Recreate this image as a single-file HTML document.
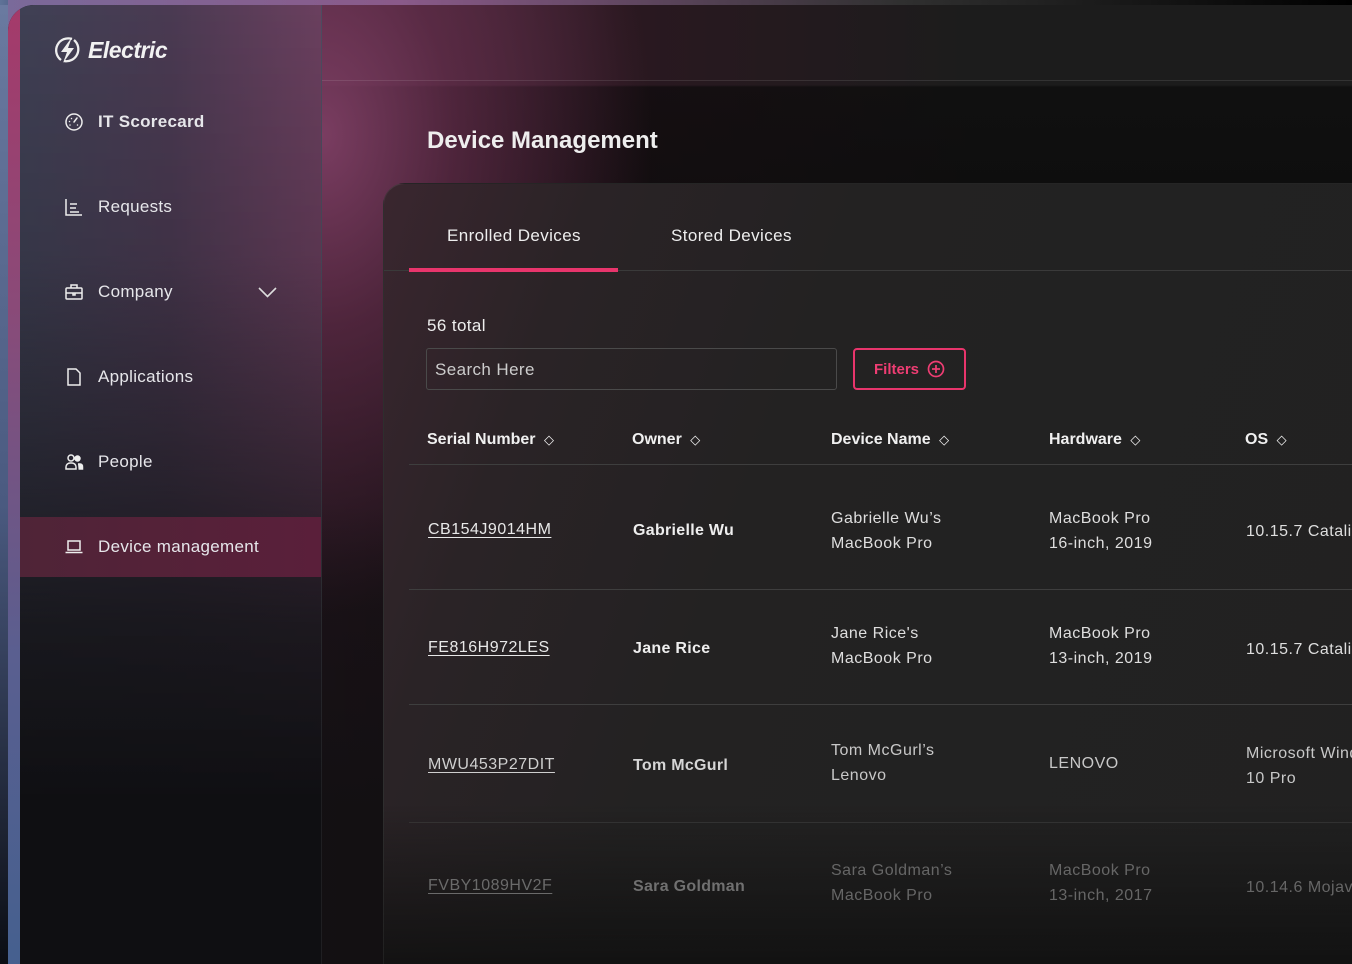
<!DOCTYPE html>
<html><head><meta charset="utf-8"><style>
*{margin:0;padding:0;box-sizing:border-box}
html,body{width:1352px;height:964px;overflow:hidden}
body{background:#000;font-family:"Liberation Sans",Arial,sans-serif;position:relative;color:#e8e8e8}
.abs{position:absolute}
#edge{left:0;top:0;width:1352px;height:964px;background:linear-gradient(90deg,#5f7398 0,#58698f 8px,transparent 8px),linear-gradient(90deg,#7a6a9a 0,#8a5a8a 400px,#303030 900px,#000 1352px);}
#edge2{left:0;top:5px;width:8px;height:959px;background:linear-gradient(180deg,#6a7aa0 0,#4a5a80 500px,#0a0c12 964px)}
#win{left:8px;top:5px;width:1344px;height:959px;border-radius:26px 0 0 0;overflow:hidden;background:#0c0c0c}
#lstrip{left:0;top:0;width:12px;height:100%;background:linear-gradient(180deg,#a53a6a 0,#8a4a78 300px,#5a5f90 650px,#45608f 964px)}
#side{left:12px;top:0;width:302px;height:100%;background:linear-gradient(180deg,rgba(0,0,0,0) 0,rgba(0,0,0,.15) 250px,rgba(20,20,24,.9) 620px,rgba(15,15,18,1) 800px),linear-gradient(90deg,#3f4054 0,#4a3a52 150px,#6a3f5e 302px);border-right:1px solid rgba(255,255,255,0.07)}
#main{left:314px;top:0;width:1100px;height:100%;background:linear-gradient(180deg,rgba(0,0,0,0) 0,rgba(0,0,0,0) 500px,rgba(18,16,18,.9) 800px),radial-gradient(ellipse 330px 480px at 0 130px,#7a3d61 0,rgba(100,45,75,.7) 40%,rgba(0,0,0,0) 100%),linear-gradient(180deg,rgba(0,0,0,0) 0,rgba(0,0,0,0) 80px,rgba(8,8,8,.6) 82px,rgba(8,8,8,.7) 200px),linear-gradient(90deg,#4a2a3e 0,#2a1820 300px,#1c1c1c 650px,#1c1c1c 100%)}
#hline{left:322px;top:80px;width:1030px;height:1px;background:rgba(255,255,255,.1)}
#card{left:383px;top:183px;width:1000px;height:781px;border-radius:22px 0 0 0;background:linear-gradient(180deg,rgba(0,0,0,0) 0,rgba(0,0,0,0) 620px,rgba(15,15,15,.85) 781px),linear-gradient(110deg,#3a262f 0,#2a2326 200px,#232222 450px,#212121 100%);border-top:1px solid rgba(255,255,255,.08);border-left:1px solid rgba(255,255,255,.06)}
.nav{left:64px;font-size:17px;color:#e6e6ea;display:flex;align-items:center;gap:14px;letter-spacing:.3px}
.nav svg{width:20px;height:20px}
.th{top:431px;font-size:16px;font-weight:bold;color:#f0f0f0}
.th span{font-weight:normal;font-size:13px;margin-left:4px}
.line{left:409px;width:1000px;height:1px;background:#3e3e3e}
.sn{left:428px;font-size:16px;text-decoration:underline;text-underline-offset:3px;color:#e8e8e8;letter-spacing:.5px}
.ow{left:633px;font-size:16px;font-weight:bold;color:#eee;letter-spacing:.3px}
.c{font-size:16px;line-height:25px;color:#dedede;letter-spacing:.5px}
.t{letter-spacing:.4px}
</style></head><body>
<div class="abs" id="edge"></div>
<div class="abs" id="edge2"></div>
<div class="abs" id="win">
<div class="abs" id="lstrip"></div>
<div class="abs" id="side"></div>
<div class="abs" id="main"></div>
</div>
<div class="abs" id="hline"></div>
<div class="abs" style="left:20px;top:517px;width:301px;height:60px;background:linear-gradient(90deg,#4f2437,#5a1f3a)"></div>

<div class="abs" style="left:52px;top:34px;display:flex;align-items:center;gap:5px">
<svg width="31" height="32" viewBox="0 0 31 32"><path d="M9 26A12 12 0 0 1 20 5M22 6A12 12 0 0 1 12 27" fill="none" stroke="#eee" stroke-width="2.3"/><path d="M20 3L9 18h6l-4 11 11-15h-6z" fill="#eee"/></svg>
<span style="font-size:23px;font-weight:bold;font-style:italic;color:#f2f2f2;letter-spacing:-0.5px">Electric</span></div>

<div class="abs nav" style="top:112px;font-weight:bold"><svg viewBox="0 0 20 20" fill="none" stroke="#eee" stroke-width="1.5"><circle cx="10" cy="10" r="8"/><path d="M10 10l3-4M6 13h0M5.5 9.5h0M7.5 6.5h0M13.5 13h0" stroke-linecap="round"/></svg>IT Scorecard</div>
<div class="abs nav" style="top:197px"><svg viewBox="0 0 20 20" fill="none" stroke="#eee" stroke-width="1.5"><path d="M2 2v16h16M6 7h7M6 11h6M6 15h9"/></svg>Requests</div>
<div class="abs nav" style="top:282px"><svg viewBox="0 0 20 20" fill="none" stroke="#eee" stroke-width="1.5"><rect x="2" y="6" width="16" height="11" rx="1"/><path d="M7 6V3h6v3M2 11h16M9 11v2h2v-2"/></svg>Company</div>
<svg class="abs" style="left:258px;top:285px" width="19" height="14" viewBox="0 0 19 14"><path d="M1 3l8.5 8.5L18 3" fill="none" stroke="#ddd" stroke-width="1.6"/></svg>
<div class="abs nav" style="top:367px"><svg viewBox="0 0 20 20" fill="none" stroke="#eee" stroke-width="1.5"><path d="M4 2h8l4 4v12H4z"/></svg>Applications</div>
<div class="abs nav" style="top:452px"><svg viewBox="0 0 20 20" fill="none" stroke="#eee" stroke-width="1.5"><circle cx="7" cy="6" r="3"/><path d="M2 17v-2a4 4 0 0 1 4-4h2a4 4 0 0 1 4 4v2z"/><circle cx="13.5" cy="6.5" r="2.5" fill="#eee"/><path d="M14 12h2a2.5 2.5 0 0 1 2.5 3v2h-4" fill="#eee"/></svg>People</div>
<div class="abs nav" style="top:537px"><svg viewBox="0 0 20 20" fill="none" stroke="#eee" stroke-width="1.5"><rect x="4" y="4" width="12" height="9"/><path d="M1.5 15.5h17"/></svg>Device management</div>

<div class="abs" style="left:427px;top:127px;font-size:24px;font-weight:bold;color:#eee">Device Management</div>

<div class="abs" id="card"></div>
<div class="abs" style="left:384px;top:270px;width:968px;height:1px;background:#3a3a3a"></div>
<div class="abs" style="left:409px;top:268px;width:209px;height:4px;background:#e8356c"></div>
<div class="abs t" style="left:447px;top:226px;font-size:17px;color:#eee">Enrolled Devices</div>
<div class="abs t" style="left:671px;top:226px;font-size:17px;color:#eee">Stored Devices</div>
<div class="abs t" style="left:427px;top:316px;font-size:17px;color:#eee">56 total</div>
<div class="abs t" style="left:426px;top:348px;width:411px;height:42px;border:1px solid #4a4a4a;border-radius:3px;padding:11px 8px;font-size:17px;color:#ccc">Search Here</div>
<div class="abs" style="left:853px;top:348px;width:113px;height:42px;border:2px solid #e8356c;border-radius:4px;display:flex;align-items:center;justify-content:center;gap:8px;font-size:15px;font-weight:bold;color:#ee3d73">Filters <svg width="18" height="18" viewBox="0 0 18 18" fill="none" stroke="#ee3d73" stroke-width="1.7"><circle cx="9" cy="9" r="7.5"/><path d="M9 5v8M5 9h8"/></svg></div>

<div class="abs th" style="left:427px">Serial Number <span>◇</span></div>
<div class="abs th" style="left:632px">Owner <span>◇</span></div>
<div class="abs th" style="left:831px">Device Name <span>◇</span></div>
<div class="abs th" style="left:1049px">Hardware <span>◇</span></div>
<div class="abs th" style="left:1245px">OS <span>◇</span></div>
<div class="abs line" style="top:464px"></div>
<div class="abs line" style="top:589px"></div>
<div class="abs line" style="top:704px"></div>
<div class="abs line" style="top:822px;opacity:.6"></div>

<div class="abs sn" style="top:521px">CB154J9014HM</div>
<div class="abs ow" style="top:522px">Gabrielle Wu</div>
<div class="abs c" style="left:831px;top:506px">Gabrielle Wu’s<br>MacBook Pro</div>
<div class="abs c" style="left:1049px;top:506px">MacBook Pro<br>16-inch, 2019</div>
<div class="abs c" style="left:1246px;top:519px;white-space:nowrap">10.15.7 Catalina</div>

<div class="abs sn" style="top:639px">FE816H972LES</div>
<div class="abs ow" style="top:640px">Jane Rice</div>
<div class="abs c" style="left:831px;top:621px">Jane Rice's<br>MacBook Pro</div>
<div class="abs c" style="left:1049px;top:621px">MacBook Pro<br>13-inch, 2019</div>
<div class="abs c" style="left:1246px;top:637px;white-space:nowrap">10.15.7 Catalina</div>

<div class="abs sn" style="top:756px;color:#cfcfcf">MWU453P27DIT</div>
<div class="abs ow" style="top:757px;color:#d6d6d6">Tom McGurl</div>
<div class="abs c" style="left:831px;top:738px;color:#c8c8c8">Tom McGurl’s<br>Lenovo</div>
<div class="abs c" style="left:1049px;top:751px;color:#c8c8c8">LENOVO</div>
<div class="abs c" style="left:1246px;top:741px;white-space:nowrap;color:#c8c8c8">Microsoft Windows<br>10 Pro</div>

<div class="abs sn" style="top:877px;color:#6a6a6a">FVBY1089HV2F</div>
<div class="abs ow" style="top:878px;color:#707070">Sara Goldman</div>
<div class="abs c" style="left:831px;top:858px;color:#666">Sara Goldman’s<br>MacBook Pro</div>
<div class="abs c" style="left:1049px;top:858px;color:#666">MacBook Pro<br>13-inch, 2017</div>
<div class="abs c" style="left:1246px;top:875px;white-space:nowrap;color:#666">10.14.6 Mojave</div>
</body></html>
